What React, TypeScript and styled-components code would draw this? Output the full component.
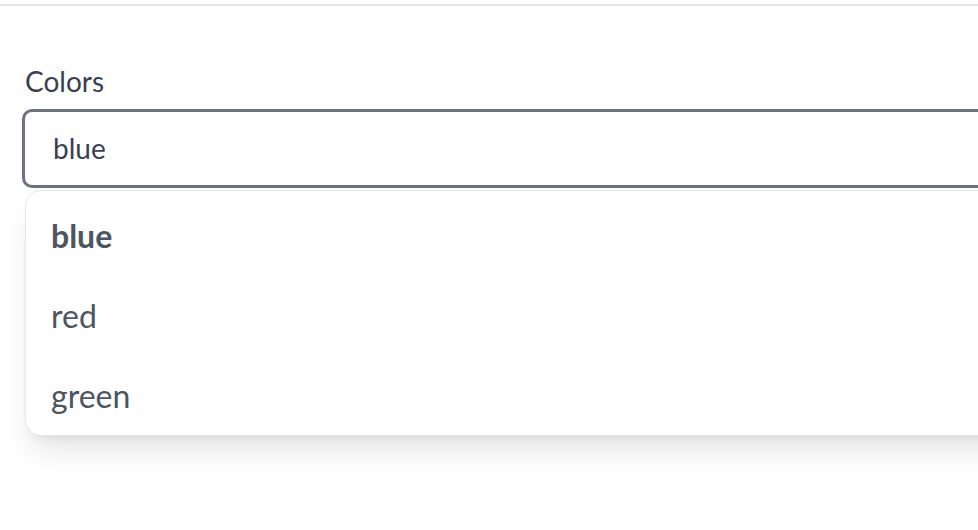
import React from "react";
import styled, { createGlobalStyle } from "styled-components";

const Global = createGlobalStyle`
  html, body { margin: 0; padding: 0; background: #ffffff; overflow: hidden; }
  body { font-family: Lato, "Noto Sans", sans-serif; }
`;

const Page = styled.div`
  width: 1200px;
  height: 530px;
  display: flex;
  flex-direction: column;
`;

const TopRule = styled.div`
  height: 2px;
  margin-top: 4px;
  background: #e5e7eb;
`;

const Field = styled.div`
  display: flex;
  flex-direction: column;
  padding: 55px 0 0 22px;
`;

const Label = styled.label`
  font-size: 28px;
  line-height: 40px;
  color: #374151;
  padding-left: 3px;
  margin-bottom: 8px;
`;

const ComboWrap = styled.div`
  position: relative;
`;

const Input = styled.div`
  box-sizing: border-box;
  height: 79px;
  border: 3px solid #6b7280;
  border-radius: 10px;
  padding: 0 0 2px 28px;
  display: flex;
  align-items: center;
  font-size: 28px;
  color: #374151;
`;

const Menu = styled.ul`
  position: absolute;
  top: calc(100% + 2px);
  left: 3px;
  right: 0;
  margin: 0;
  padding: 4px 0 0;
  list-style: none;
  background: #ffffff;
  border: 1px solid #e5e7eb;
  border-radius: 16px;
  box-shadow: 0 20px 30px -6px rgba(0, 0, 0, 0.1), 0 8px 12px -8px rgba(0, 0, 0, 0.1);
`;

const Option = styled.li<{ $selected?: boolean }>`
  height: 80px;
  display: flex;
  align-items: center;
  padding-left: 25px;
  font-size: 32px;
  color: #4b5563;
  font-weight: ${(p) => (p.$selected ? 700 : 400)};
`;

export default function App() {
  const options = ["blue", "red", "green"];
  return (
    <Page>
      <Global />
      <TopRule />
      <Field>
        <Label>Colors</Label>
        <ComboWrap>
          <Input>blue</Input>
          <Menu>
            {options.map((o) => (
              <Option key={o} $selected={o === "blue"}>
                {o}
              </Option>
            ))}
          </Menu>
        </ComboWrap>
      </Field>
    </Page>
  );
}
